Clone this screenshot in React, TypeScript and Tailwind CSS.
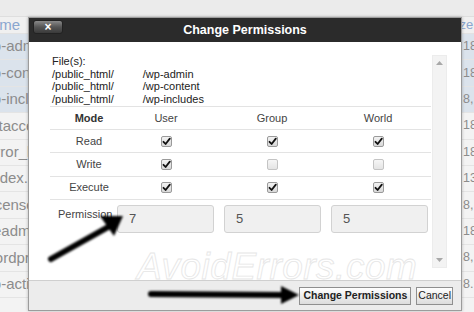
import React from 'react';

const bgRows = [
  { left: 'wp-admin', ml: '-ml-[18px]', right: '18', blue: true },
  { left: 'wp-content', ml: '-ml-[18px]', right: '18', blue: true },
  { left: 'wp-includes', ml: '-ml-[18px]', right: '8,', blue: true },
  { left: '.htaccess', ml: '-ml-[14px]', right: '18', blue: false },
  { left: 'error_log', ml: '-ml-[13px]', right: '18', blue: false },
  { left: 'index.php', ml: '-ml-[12px]', right: '13', blue: false },
  { left: 'license.txt', ml: '-ml-[12px]', right: '8,', blue: false },
  { left: 'readme.html', ml: '-ml-[12px]', right: '18', blue: false },
  { left: 'wordpress', ml: '-ml-[16px]', right: '8,', blue: false },
  { left: 'wp-activate', ml: '-ml-[18px]', right: '8.', blue: false },
];

const Check: React.FC<{ on: boolean }> = ({ on }) => (
  <span
    className={`inline-flex w-[11px] h-[11px] items-center justify-center rounded-[2px] border ${
      on ? 'border-[#9a9a9a] bg-gradient-to-b from-[#f2f2f2] to-[#d8d8d8]' : 'border-[#c4c4c4] bg-gradient-to-b from-[#f6f6f6] to-[#e4e4e4]'
    }`}
  >
    {on && (
      <svg width="9" height="9" viewBox="0 0 9 9">
        <path d="M1.5 4.8 L3.6 7 L7.8 1.6" stroke="#111" strokeWidth="1.8" fill="none" strokeLinecap="round" strokeLinejoin="round" />
      </svg>
    )}
  </span>
);

const perms = [
  { mode: 'Read', user: true, group: true, world: true },
  { mode: 'Write', user: true, group: false, world: false },
  { mode: 'Execute', user: true, group: true, world: true },
];

const cols = 'grid grid-cols-[78px_76px_136px_76px_1fr] items-center';

export default function App() {
  return (
    <div className="relative w-[474px] h-[312px] overflow-hidden bg-[#f3f3f3] font-['Liberation_Sans',Arial,sans-serif]">
      {/* file list behind the dialog */}
      <div className="h-[17px] bg-[#ebebeb] border-b border-[#dedede]" />
      <div className="h-[17px] flex justify-between items-center border-b border-[#e2e2e2] bg-[#f0f0f0] text-[15px] text-[#8aa6cf]">
        <div className="w-[28px] overflow-hidden whitespace-nowrap"><span className="-ml-[20px] inline-block">Name</span></div>
        <div className="w-[12px] overflow-hidden whitespace-nowrap text-[13px]"><span className="-ml-[14px] inline-block">Size</span></div>
      </div>
      {bgRows.map((r) => (
        <div
          key={r.left}
          className={`h-[26.4px] flex justify-between items-center border-b border-[#e4e4e4] text-[15px] text-[#8c8c8c] ${
            r.blue ? 'bg-[#dbe3ec]' : 'bg-[#f3f3f3]'
          }`}
        >
          <div className="w-[28px] overflow-hidden whitespace-nowrap">
            <span className={`${r.ml} inline-block`}>{r.left}</span>
          </div>
          <div className="w-[12px] h-full flex items-center overflow-hidden whitespace-nowrap pl-[1px] text-[12.5px]">{r.right}</div>
        </div>
      ))}

      {/* dialog */}
      <div className="absolute left-[28px] top-[17px] w-[434px] h-[294px] border border-[#9c9c9c] bg-white flex flex-col shadow-[0_0_3px_rgba(0,0,0,0.25)]">
        <div className="h-[24px] bg-[#2b2b2b] relative flex items-center justify-center">
          <div className="absolute left-[4px] top-[2px] w-[30px] h-[14px] rounded-[3px] bg-gradient-to-b from-[#8a8a8a] via-[#555] to-[#3a3a3a] border border-[#222] flex items-center justify-center">
            <span className="text-white text-[12px] font-bold leading-none">×</span>
          </div>
          <span className="text-white text-[12.5px] font-bold">Change Permissions</span>
        </div>

        <div className="relative flex-1 flex pl-[21px] pt-[13px]">
          <div className="w-[381px] text-[11px] text-[#222]">
            <div className="pl-[2px] leading-[12.5px]">
              <div>File(s):</div>
              <div>/public_html/<span className="inline-block w-[29px]" />/wp-admin</div>
              <div>/public_html/<span className="inline-block w-[29px]" />/wp-content</div>
              <div>/public_html/<span className="inline-block w-[29px]" />/wp-includes</div>
            </div>

            <div className="mt-[1px] border-t border-[#e3e3e3] text-[11px]">
              <div className={`${cols} h-[23px] border-b border-[#e3e3e3] text-[#444]`}>
                <div className="text-center font-bold text-[#333]">Mode</div>
                <div className="text-center">User</div>
                <div className="text-center">Group</div>
                <div className="text-center">World</div>
              </div>
              {perms.map((p) => (
                <div key={p.mode} className={`${cols} h-[23.3px] border-b border-[#e3e3e3] text-[#444]`}>
                  <div className="text-center">{p.mode}</div>
                  <div className="flex justify-center"><Check on={p.user} /></div>
                  <div className="flex justify-center"><Check on={p.group} /></div>
                  <div className="flex justify-center"><Check on={p.world} /></div>
                </div>
              ))}
            </div>

            <div className="flex mt-[5px] text-[11px] text-[#444]">
              <div className="w-[67px] pl-[8px] pt-[1px]">Permission</div>
              {['7', '5', '5'].map((v, i) => (
                <div
                  key={i}
                  className={`w-[97px] h-[28px] ${i > 0 ? 'ml-[10px]' : ''} rounded-[3px] border border-[#d2d2d2] bg-[#f0f0f0] flex items-center pl-[11px] text-[13px] text-[#555]`}
                >
                  {v}
                </div>
              ))}
            </div>
          </div>

          {/* scrollbar */}
          <div className="ml-[1px] w-[15px] h-[213px] bg-[#f3f3f3] border border-[#ececec] flex flex-col justify-between items-center py-[5px]">
            <svg width="7" height="4" viewBox="0 0 7 4"><path d="M0 4 L3.5 0 L7 4 Z" fill="#a8a8a8" /></svg>
            <svg width="7" height="4" viewBox="0 0 7 4"><path d="M0 0 L3.5 4 L7 0 Z" fill="#a8a8a8" /></svg>
          </div>

          {/* watermark */}
          <div className="absolute left-[108px] top-[206px] text-[37px] leading-none italic text-white tracking-[0.5px] [-webkit-text-stroke:0.8px_#e6e6e6] pointer-events-none">
            AvoidErrors.com
          </div>
        </div>

        <div className="h-[30px] bg-[#ececec] border-t border-[#cfcfcf] flex items-center justify-end pr-[8px] gap-[5px] text-[10.5px] text-[#222]">
          <div className="h-[18px] px-[3px] flex items-center border border-[#8f8f8f] bg-gradient-to-b from-white to-[#dcdcdc] font-bold">
            Change Permissions
          </div>
          <div className="h-[18px] px-[1px] flex items-center border border-[#8f8f8f] bg-gradient-to-b from-white to-[#dcdcdc]">
            Cancel
          </div>
        </div>
      </div>

      {/* arrows */}
      <svg className="absolute left-0 top-0 pointer-events-none" width="474" height="312" viewBox="0 0 474 312">
        <defs>
          <filter id="sh" x="-20%" y="-20%" width="140%" height="140%">
            <feGaussianBlur stdDeviation="1.2" />
          </filter>
        </defs>
        <g filter="url(#sh)">
          <path d="M51 259 L110 226" stroke="#000" strokeWidth="6" strokeLinecap="round" fill="none" />
          <path d="M100 216 L123 216 L114 236 Z" fill="#000" />
          <path d="M151 294 L284 295" stroke="#000" strokeWidth="6" strokeLinecap="round" fill="none" />
          <path d="M281 286 L299 295 L281 304 Z" fill="#000" />
        </g>
      </svg>
    </div>
  );
}
